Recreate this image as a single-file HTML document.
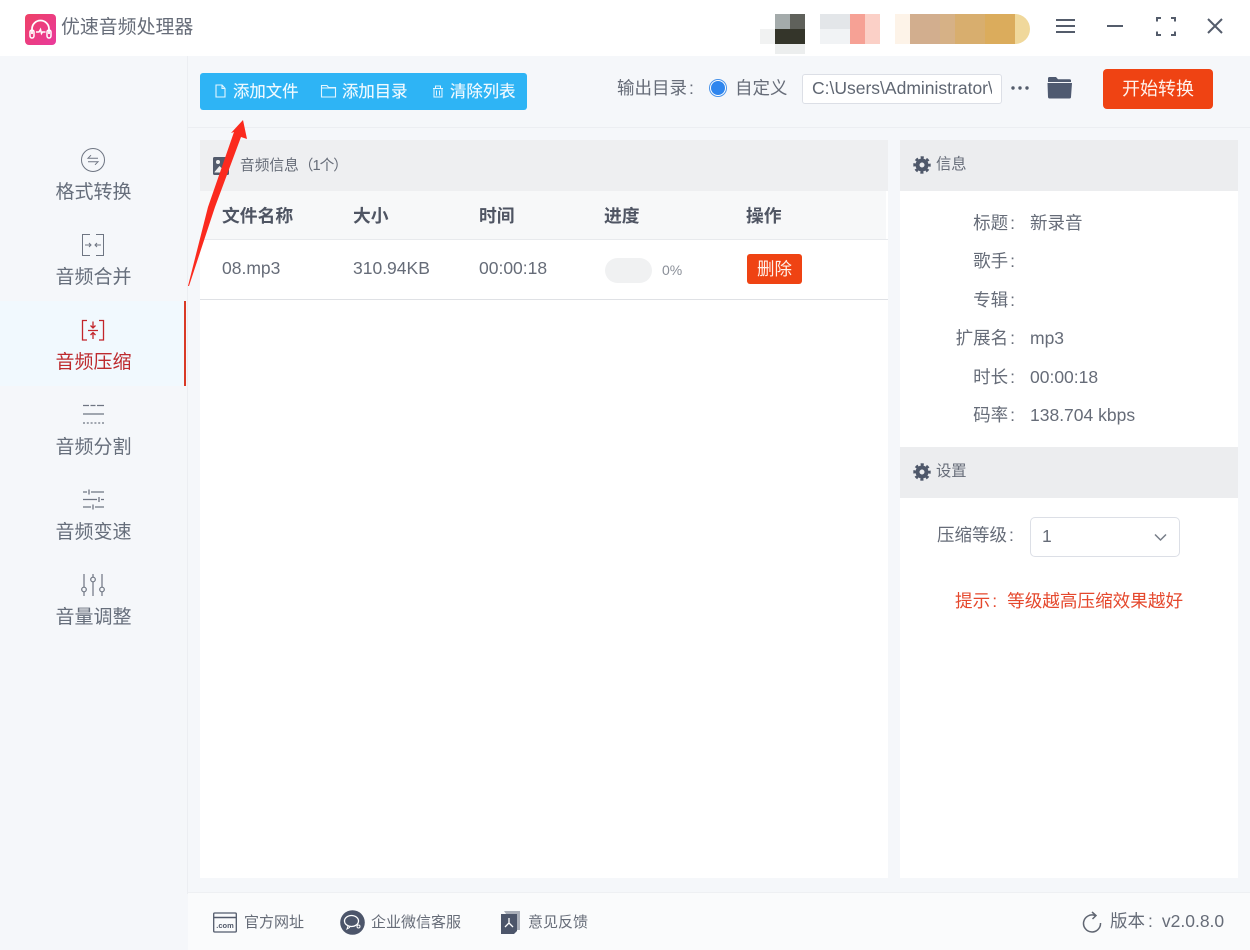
<!DOCTYPE html>
<html lang="zh"><head><meta charset="utf-8"><title>优速音频处理器</title>
<style>
html,body{margin:0;padding:0;width:1250px;height:950px;overflow:hidden;background:#f5f7fa}
body{position:relative;font-family:"Liberation Sans","Noto Sans CJK SC",sans-serif;color:#606266}
div,svg{position:absolute}
.t{white-space:nowrap;line-height:24px;height:24px}
.t i{font-style:normal;margin:0 0 0 2px}
.nav{left:0;width:187px;text-align:center;font-size:19px;color:#666e7b;line-height:24px;height:24px}
.th{font-size:17.800px;font-weight:700;color:#4f5563;top:204px}
.td{font-size:17.500px;color:#666c78;top:256px}
.lb{font-size:17.500px;color:#666c78;width:100px;text-align:right;left:915px}
.v{font-size:17.500px;color:#666c78;left:1030px}
.tb{font-size:16.400px;color:#eef9ff;top:80px;text-shadow:0 0 .4px #eef9ff}
.b{background:#fff}
</style></head><body>
<div class="b" style="left:0;top:0;width:1250px;height:56px"></div>

<!-- logo -->
<div style="left:25px;top:14px;width:31px;height:31px;border-radius:4px;background:linear-gradient(135deg,#ee4166,#e93a9c)"></div>
<svg style="left:25px;top:14px" width="31" height="31" viewBox="0 0 31 31" fill="none" stroke="#fff"><path d="M7 20V15a8.500 8.500 0 0 1 17 0v5" stroke-width="1.800"/><rect x="5" y="16" width="4" height="8" rx="2" stroke-width="1.500"/><rect x="22" y="16" width="4" height="8" rx="2" stroke-width="1.500"/><path d="M11 18h3l1.500-2.500 1 4 1-1.500h3" stroke-width="1.500"/></svg>
<div class="t" style="left:61px;top:16px;font-size:18.900px;color:#666c78">优速音频处理器</div>

<!-- blurred user area -->
<div style="left:760px;top:29px;width:15px;height:15px;background:#f1f2f2"></div>
<div style="left:775px;top:14px;width:15px;height:15px;background:#a4abab"></div>
<div style="left:790px;top:14px;width:15px;height:15px;background:#5f615b"></div>
<div style="left:775px;top:29px;width:30px;height:15px;background:#34352a"></div>
<div style="left:775px;top:44px;width:30px;height:10px;background:#eceeee"></div>
<div style="left:820px;top:14px;width:30px;height:15px;background:#e3e6e9"></div>
<div style="left:820px;top:29px;width:30px;height:15px;background:#f1f3f5"></div>
<div style="left:850px;top:14px;width:15px;height:30px;background:#f6a195"></div>
<div style="left:865px;top:14px;width:15px;height:30px;background:#fbd0c7"></div>
<div style="left:895px;top:14px;width:15px;height:30px;background:#fdf3e8"></div>
<div style="left:910px;top:14px;width:30px;height:30px;background:#d2ae8e"></div>
<div style="left:940px;top:14px;width:15px;height:30px;background:#d6b186"></div>
<div style="left:955px;top:14px;width:30px;height:30px;background:#d8ae6e"></div>
<div style="left:985px;top:14px;width:30px;height:30px;background:#dbac5c"></div>
<div style="left:1015px;top:14px;width:15px;height:30px;border-radius:0 15px 15px 0;background:#f0d89b"></div>

<!-- window buttons -->
<svg style="left:1050px;top:12px" width="180" height="30" viewBox="0 0 180 30" fill="none" stroke="#545c6b" stroke-width="2"><path d="M6 8h19M6 14h19M6 20h19"/><path d="M57 14h16"/><path d="M107 9.500V6h4M121 6h4v3.500M125 19.500V23h-4M111 23h-4v-3.500"/><path d="M158 7l14 14M172 7l-14 14"/></svg>

<!-- sidebar -->
<div style="left:187px;top:56px;width:1px;height:838px;background:#eceef2"></div>
<div style="left:0;top:301px;width:186px;height:85px;background:#f1f9fe"></div>
<div style="left:184px;top:301px;width:2px;height:85px;background:#d93a26"></div>

<svg style="left:80px;top:147px" width="26" height="26" viewBox="0 0 26 26" fill="none" stroke="#6e7582" stroke-width="1"><circle cx="13" cy="13" r="11.500"/><path d="M18 11.200H8l3-3M8 14.800h10l-3 3"/></svg>
<div class="nav" style="top:181px">格式转换</div>
<svg style="left:81px;top:233px" width="24" height="24" viewBox="0 0 24 24" fill="none" stroke="#6e7582" stroke-width="1"><path d="M9 1.500H1.500v21H9M15 1.500h7.500v21H15"/><path d="M4 12h6M8 10l2 2-2 2M20 12h-6M16 10l-2 2 2 2"/></svg>
<div class="nav" style="top:266px">音频合并</div>
<svg style="left:81px;top:318px" width="24" height="24" viewBox="0 0 24 24" fill="none" stroke="#c3252b" stroke-width="1.300"><path d="M6 2.500H1.500v19.500H6M18 2.500h4.500v19.500H18"/><path d="M12 3.500v6.500M9.500 7.500l2.500 2.500 2.500-2.500M7 12.500h10M12 21v-6.500M9.500 17l2.500-2.500 2.500 2.500"/></svg>
<div class="nav" style="top:351px;color:#bd2a2e">音频压缩</div>
<svg style="left:81px;top:402px" width="24" height="24" viewBox="0 0 24 24" fill="none" stroke="#6e7582"><path d="M2 3.500h6M9.500 3.500h5M16 3.500h7" stroke-width="1.300"/><path d="M2 12h21" stroke-width="1.300"/><path d="M2 21h21" stroke-width="1.300" stroke-dasharray="2 1.800"/></svg>
<div class="nav" style="top:436px">音频分割</div>
<svg style="left:81px;top:488px" width="24" height="24" viewBox="0 0 24 24" fill="none" stroke="#6e7582" stroke-width="1.300"><path d="M2 4h4M10 4h13M8 1.500v5M2 11.500h14M20 11.500h3M18 9v5M2 19h8M14 19h9M12 16.500v5"/></svg>
<div class="nav" style="top:521px">音频变速</div>
<svg style="left:81px;top:573px" width="24" height="24" viewBox="0 0 24 24" fill="none" stroke="#6e7582" stroke-width="1.200"><path d="M3 1v13M3 19v4M12 1v3M12 9v14M21 1v13M21 19v4"/><circle cx="3" cy="16.500" r="2.300"/><circle cx="12" cy="6.500" r="2.300"/><circle cx="21" cy="16.500" r="2.300"/></svg>
<div class="nav" style="top:606px">音量调整</div>

<!-- toolbar -->
<div style="left:188px;top:127px;width:1062px;height:1px;background:#eceef2"></div>
<div style="left:200px;top:73px;width:327px;height:37px;border-radius:3px;background:#2eb4f5"></div>
<svg style="left:200px;top:73px" width="327" height="37" viewBox="0 0 327 37" fill="none" stroke="#e4f6ff" stroke-width="1.100"><path d="M16 12h6l3 3.500V24h-9zM22 12v3.500h3"/><path d="M121.500 12.500h5.500l1.500 2h7v9.500h-14zM121.500 15h14"/><path d="M233 15.500h10M235.500 15.500v-2.500h5v2.500M234 16v8h8v-8M236.500 17.500v5M239.500 17.500v5" stroke-width="1"/></svg>
<div class="t tb" style="left:233px">添加文件</div>
<div class="t tb" style="left:342px">添加目录</div>
<div class="t tb" style="left:450px">清除列表</div>

<div class="t" style="left:617px;top:76px;font-size:17.500px;color:#666c78">输出目录<i>:</i></div>
<div style="left:709px;top:79px;width:18px;height:18px;border:1px solid #4a94ea;border-radius:50%;background:#fff;box-sizing:border-box"></div>
<div style="left:711px;top:81px;width:14px;height:14px;border-radius:50%;background:#2f86ee"></div>
<div class="t" style="left:735px;top:76px;font-size:17.500px;color:#666c78">自定义</div>
<div style="left:802px;top:74px;width:200px;height:30px;box-sizing:border-box;border:1px solid #dcdfe6;border-radius:3px;background:#fff"></div>
<div class="t" style="left:812px;top:76px;width:180px;overflow:hidden;font-size:17.500px;color:#5f6672">C:\Users\Administrator\</div>
<svg style="left:1010px;top:84px" width="22" height="8" fill="#545c6b"><circle cx="3" cy="4" r="1.700"/><circle cx="10" cy="4" r="1.700"/><circle cx="17" cy="4" r="1.700"/></svg>
<svg style="left:1047px;top:76px" width="26" height="24" viewBox="0 0 26 24" fill="#4f5a70"><path d="M1 2.500Q1 1 2.500 1h6.500l2 2.200h11.500Q24 3.200 24 4.500V6H1z"/><path d="M0.500 7h24.500L24 21Q24 22.500 22.500 22.500h-20Q1.200 22.500 1 21z"/></svg>
<div style="left:1103px;top:69px;width:110px;height:40px;border-radius:4px;background:#ef4313"></div>
<div class="t" style="left:1103px;top:77px;width:110px;text-align:center;font-size:18px;color:#fff3ee">开始转换</div>

<!-- left panel -->
<div class="b" style="left:200px;top:140px;width:688px;height:738px"></div>
<div style="left:200px;top:140px;width:688px;height:51px;background:#eeeff1"></div>
<svg style="left:213px;top:157px" width="16" height="18" viewBox="0 0 16 18"><rect width="16" height="18" rx="1.500" fill="#525a6b"/><circle cx="5" cy="5" r="2" fill="#eee"/><path d="M1.500 15l5-6 3 3 2-2 3 4v1.500h-13z" fill="#eee"/></svg>
<div class="t" style="left:240px;top:154px;font-size:14.700px;color:#666c78">音频信息<span style="letter-spacing:-1px">（1个）</span></div>
<div style="left:200px;top:191px;width:686px;height:48px;background:#f7f8f9"></div>
<div style="left:200px;top:239px;width:688px;height:1px;background:#e8eaed"></div>
<div style="left:200px;top:299px;width:688px;height:1px;background:#dfe1e5"></div>
<div class="t th" style="left:222px">文件名称</div>
<div class="t th" style="left:353px">大小</div>
<div class="t th" style="left:479px">时间</div>
<div class="t th" style="left:604px">进度</div>
<div class="t th" style="left:746px">操作</div>
<div class="t td" style="left:222px">08.mp3</div>
<div class="t td" style="left:353px">310.94KB</div>
<div class="t td" style="left:479px">00:00:18</div>
<div style="left:605px;top:258px;width:47px;height:25px;border-radius:13px;background:#f0f1f2"></div>
<div class="t" style="left:662px;top:258px;font-size:14px;color:#8a8f98">0%</div>
<div style="left:747px;top:254px;width:55px;height:30px;border-radius:3px;background:#ef4313"></div>
<div class="t" style="left:747px;top:257px;width:55px;text-align:center;font-size:17.500px;color:#fff0e8">删除</div>

<!-- right panel -->
<div class="b" style="left:900px;top:140px;width:338px;height:738px"></div>
<div style="left:900px;top:140px;width:338px;height:51px;background:#ecedef"></div>
<div style="left:900px;top:447px;width:338px;height:51px;background:#ecedef"></div>
<svg style="left:913px;top:155.500px" width="18" height="18" viewBox="0 0 18 18" fill="none" stroke="#4f586a"><circle cx="9" cy="9" r="7.400" stroke-width="2.600" stroke-dasharray="3.100 2.700" stroke-dashoffset="1.500"/><circle cx="9" cy="9" r="4.500" stroke-width="4"/></svg>
<div class="t" style="left:936px;top:153px;font-size:15.300px;color:#666c78">信息</div>
<svg style="left:913px;top:462.500px" width="18" height="18" viewBox="0 0 18 18" fill="none" stroke="#4f586a"><circle cx="9" cy="9" r="7.400" stroke-width="2.600" stroke-dasharray="3.100 2.700" stroke-dashoffset="1.500"/><circle cx="9" cy="9" r="4.500" stroke-width="4"/></svg>
<div class="t" style="left:936px;top:460px;font-size:15.300px;color:#666c78">设置</div>

<div class="t lb" style="top:211px">标题<i>:</i></div><div class="t v" style="top:211px">新录音</div>
<div class="t lb" style="top:249px">歌手<i>:</i></div>
<div class="t lb" style="top:288px">专辑<i>:</i></div>
<div class="t lb" style="top:326px">扩展名<i>:</i></div><div class="t v" style="top:326px">mp3</div>
<div class="t lb" style="top:365px">时长<i>:</i></div><div class="t v" style="top:365px">00:00:18</div>
<div class="t lb" style="top:403px">码率<i>:</i></div><div class="t v" style="top:403px">138.704 kbps</div>

<div class="t" style="left:937px;top:523px;font-size:17.500px;color:#666c78">压缩等级<i>:</i></div>
<div style="left:1030px;top:517px;width:150px;height:40px;box-sizing:border-box;border:1px solid #dcdfe6;border-radius:5px;background:#fff"></div>
<div class="t" style="left:1042px;top:524px;font-size:17.500px;color:#666c78">1</div>
<svg style="left:1153px;top:531px" width="15" height="12" fill="none" stroke="#777d88" stroke-width="1.500"><path d="M2 3.500l5.500 5.500 5.500-5.500"/></svg>
<div class="t" style="left:955px;top:589px;font-size:17.600px;color:#e5482d">提示<i style="margin:0 10px 0 2px">:</i>等级越高压缩效果越好</div>

<!-- footer -->
<div style="left:188px;top:892px;width:1062px;height:58px;background:#fafbfc"></div>
<div style="left:188px;top:892px;width:1062px;height:1px;background:#eef0f3"></div>
<svg style="left:213px;top:912px" width="24" height="21" viewBox="0 0 24 21" fill="none" stroke="#525a6b" stroke-width="1.300"><rect x="0.700" y="1" width="22.600" height="19" rx="1"/><path d="M1 5.500h22" stroke-width="1.600"/><text x="12" y="16" font-size="7.500" font-weight="700" fill="#525a6b" stroke="none" text-anchor="middle" font-family="Liberation Sans">.com</text></svg>
<div class="t" style="left:244px;top:911px;font-size:15px;color:#666c78">官方网址</div>
<svg style="left:340px;top:910px" width="25" height="25" viewBox="0 0 25 25"><circle cx="12.500" cy="12.500" r="12.300" fill="#4c556a"/><ellipse cx="11.500" cy="11" rx="7" ry="5.500" fill="none" stroke="#fff" stroke-width="1.300"/><circle cx="18.500" cy="16.500" r="1.500" fill="none" stroke="#fff"/><path d="M8 16l-1 3 3-1.800" fill="none" stroke="#fff"/></svg>
<div class="t" style="left:371px;top:911px;font-size:15px;color:#666c78">企业微信客服</div>
<svg style="left:501px;top:911px" width="19" height="23" viewBox="0 0 19 23"><path d="M3 0h16v19h-3z" fill="#a9aeb8"/><path d="M0 3h16v17l-3 3H0z" fill="#4c556a"/><path d="M8 7v5l-4 4M8 12l4 4" fill="none" stroke="#fff" stroke-width="1.300"/></svg>
<div class="t" style="left:528px;top:911px;font-size:15px;color:#666c78">意见反馈</div>
<svg style="left:1082px;top:911px" width="21" height="22" viewBox="0 0 21 22" fill="none" stroke="#606672" stroke-width="1.500"><path d="M13 4.500A8.500 8.500 0 1 0 18.500 12"/><path d="M10 1l4 3.500-3.500 3.500" stroke-width="1.500"/></svg>
<div class="t" style="left:1110px;top:909px;font-size:17.500px;color:#666c78">版本<i style="margin:0 9px 0 3px">:</i>v2.0.8.0</div>

<!-- red arrow annotation -->
<svg style="left:180px;top:115px" width="80" height="175" viewBox="0 0 80 175"><path d="M8 171L28 92 54 17 51 18 63 5 67 24 61 22 35 92 9 171z" fill="#fb2a1e"/></svg>
</body></html>
